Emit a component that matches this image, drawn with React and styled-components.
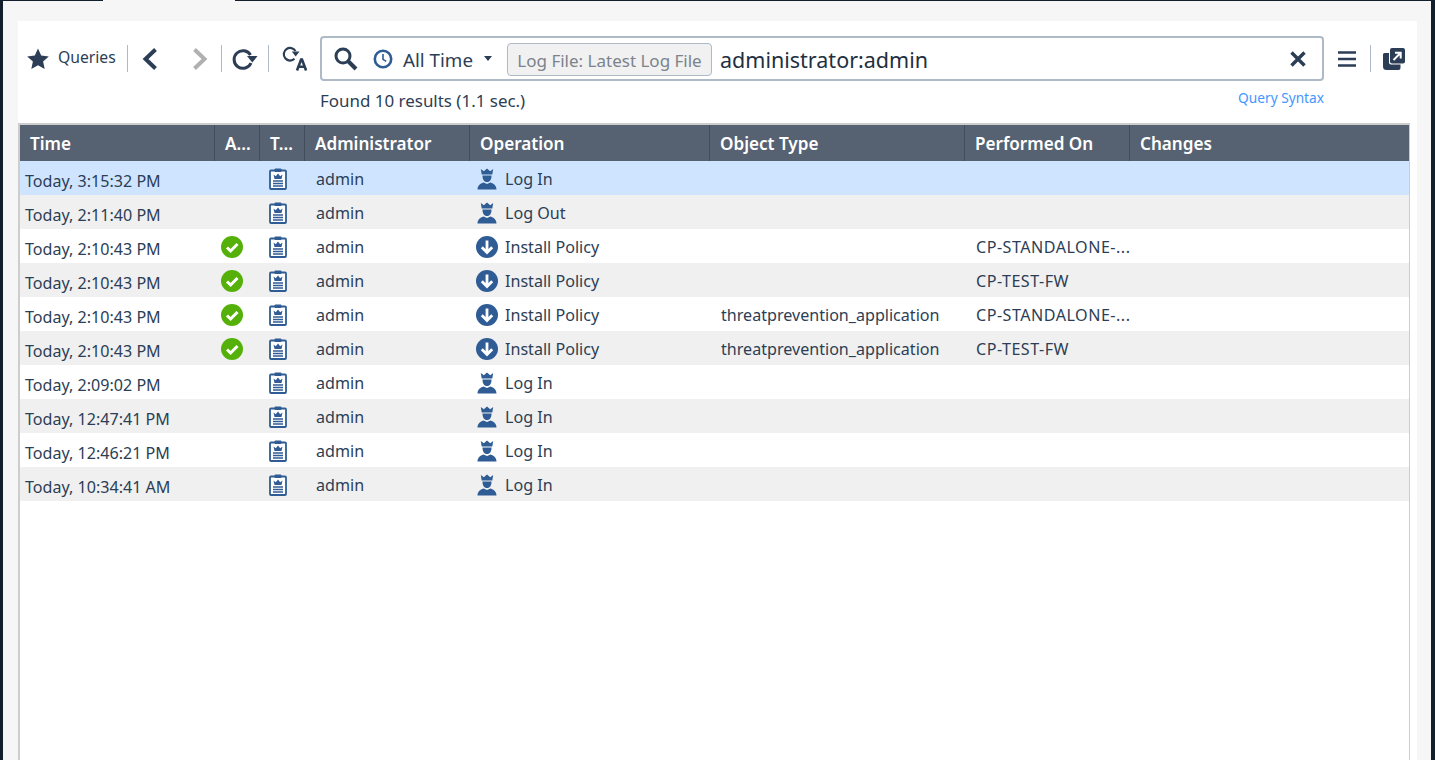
import React from 'react'
import styled, { createGlobalStyle } from 'styled-components'

const GlobalStyle = createGlobalStyle`
  html, body { margin: 0; padding: 0; height: 100%; overflow: hidden; background: #141f2e; }
  body { font-family: "Noto Sans", "Open Sans", "Liberation Sans", sans-serif; color: #2c3e55; }
`

/* ---------------------------- shell ---------------------------- */
const Page = styled.div`
  height: 760px;
  padding: 1px 4px 0 3px;
  box-sizing: border-box;
  overflow: hidden;
`
const Panel = styled.div`
  position: relative;
  height: 759px;
  background: #f6f6f6;
  padding: 20px 14px 0 15px;
  box-sizing: border-box;
`
const ActiveTab = styled.div`
  position: absolute;
  top: -1px;
  left: 100px;
  width: 132px;
  height: 1px;
  background: #f6f6f6;
`
const Content = styled.div`
  background: #fff;
  height: 739px;
  display: flex;
  flex-direction: column;
`

/* ---------------------------- toolbar ---------------------------- */
const Toolbar = styled.div`
  height: 60px;
  display: flex;
  align-items: flex-start;
  padding: 15px 0 0 8px;
  box-sizing: border-box;
`
const Tool = styled.div`
  width: ${p => p.$w}px;
  margin-left: ${p => p.$ml || 0}px;
  margin-right: ${p => p.$mr || 0}px;
  height: 45px;
  flex: none;
  display: flex;
  align-items: center;
  justify-content: ${p => p.$left ? 'flex-start' : 'center'};
`
const QueriesLabel = styled.span`
  font-size: 15.7px;
  margin-left: 8px;
  position: relative;
  top: -2px;
`
const Sep = styled.div`
  width: 1px;
  height: 27px;
  flex: none;
  background: #aebac6;
  margin-top: 9px;
`
const SearchBox = styled.div`
  width: 1004px;
  height: 45px;
  margin-right: 4px;
  flex: none;
  box-sizing: border-box;
  border: 2px solid #aebac6;
  border-radius: 4px;
  display: flex;
  align-items: center;
  padding: 0 15px 0 11px;
`
const ClockSlot = styled.span`
  display: flex;
  margin-left: 14px;
`
const TimeLabel = styled.span`
  font-size: 18.8px;
  margin: 2px 0 0 10px;
  color: #2c3e55;
`
const Caret = styled.span`
  width: 0;
  height: 0;
  margin: 0 15px 0 11px;
  border-left: 4.5px solid transparent;
  border-right: 4.5px solid transparent;
  border-top: 5px solid #2c3e55;
`
const FileChip = styled.div`
  height: 33px;
  width: 205px;
  margin-top: 2px;
  box-sizing: border-box;
  border: 1px solid #aebac6;
  border-radius: 4px;
  background: #f1f1f1;
  color: #7b838c;
  font-size: 17px;
  display: flex;
  align-items: center;
  justify-content: center;
  white-space: nowrap;
  flex: none;
  padding-top: 1px;
`
const QueryText = styled.div`
  flex: 1;
  margin: 2px 0 0 8px;
  font-size: 21.5px;
  color: #222f40;
`

const InfoRow = styled.div`
  height: 42px;
  display: flex;
  justify-content: space-between;
  align-items: flex-start;
  padding-left: 302px;
  width: 1306px;
  box-sizing: border-box;
`
const Found = styled.div`
  font-size: 16.95px;
  line-height: 20px;
  margin-top: 10px;
`
const SyntaxLink = styled.a`
  font-size: 13.7px;
  line-height: 18px;
  margin-top: 8px;
  color: #3f97ff;
`

/* ---------------------------- grid ---------------------------- */
const Grid = styled.div`
  width: 1392px;
  flex: 1;
  box-sizing: border-box;
  border-top: 2px solid #cdcdcd;
  border-left: 2px solid #cdcdcd;
  border-right: 1px solid #cdcdcd;
`
const Columns = `195px 45px 45px 165px 240px 255px 165px 1fr`
const HeaderRow = styled.div`
  display: grid;
  grid-template-columns: ${Columns};
  height: 36px;
  background: #566272;
`
const HeaderCell = styled.div`
  color: #fff;
  font-weight: 600;
  font-size: 17.1px;
  line-height: 36px;
  padding: 1px 0 0 10px;
  box-sizing: border-box;
  white-space: nowrap;
  overflow: hidden;
  border-right: 1px solid #414d5c;
  &:last-child { border-right: none; }
`
const Row = styled.div`
  display: grid;
  grid-template-columns: ${Columns};
  height: 34px;
  background: ${p => p.$selected ? '#cfe5ff' : p.$odd ? '#f0f0f0' : '#fff'};
`
const Cell = styled.div`
  font-size: 16.1px;
  padding: 2px 0 0 11px;
  box-sizing: border-box;
  white-space: nowrap;
  overflow: hidden;
  color: #2c3e55;
  display: flex;
  align-items: center;
`
const TimeCell = styled(Cell)`
  padding-left: 5px;
  padding-top: 6px;
`
const IconCell = styled(Cell)`
  padding-left: 0;
  padding-right: ${p => p.$pr}px;
  justify-content: center;
`
const TargetCell = styled(Cell)`
  letter-spacing: 0.5px;
`
const OpIcon = styled.span`
  width: 22px;
  display: flex;
  justify-content: center;
  margin: 0 7px 0 -5px;
  flex: none;
`

/* ---------------------------- icons ---------------------------- */
const navy = '#2c3e55'
const blue = '#2f5c94'

const Star = () => (
  <svg width="24" height="24" viewBox="0 0 24 24"><path fill={navy} d="M12 1.5l3.2 7.1 7.6.8-5.7 5.1 1.6 7.6L12 18.2l-6.7 3.9 1.6-7.6-5.7-5.1 7.6-.8z" /></svg>
)
const Chevron = ({ dir, color }) => (
  <svg width="20" height="26" viewBox="0 0 20 26">
    <path fill="none" stroke={color} strokeWidth="4" d={dir === 'left' ? 'M15.500 3.500L5.500 13l10 9.500' : 'M4.500 3.500l10 9.500-10 9.500'} />
  </svg>
)
const Refresh = () => (
  <svg width="26" height="24" viewBox="0 0 26 24">
    <path fill="none" stroke={navy} strokeWidth="3" d="M19 16A8.800 8.800 0 1 1 18.500 8" />
    <path fill={navy} d="M15 9h10.500l-5.200 6.500z" />
  </svg>
)
const Translate = () => (
  <svg width="28" height="30" viewBox="-1 0 28 30">
    <path fill="none" stroke={navy} strokeWidth="2.200" d="M12.500 14.800A6.300 6.300 0 1 1 13.500 7" />
    <path fill={navy} d="M9.800 7.500h7.700l-3.800 5z" />
    <path fill="none" stroke={navy} strokeWidth="2.600" d="M15 26.500l4.100-11h.9l4.100 11M16.500 22.800h6" />
  </svg>
)
const Search = () => (
  <svg width="26" height="26" viewBox="0 0 26 26">
    <circle cx="10" cy="10" r="7" fill="none" stroke={navy} strokeWidth="3" />
    <path stroke={navy} strokeWidth="4" d="M15 15l8 8" />
  </svg>
)
const Clock = () => (
  <svg width="20" height="20" viewBox="0 0 20 20">
    <circle cx="10" cy="10" r="8.200" fill="none" stroke={blue} strokeWidth="2.600" />
    <path fill="none" stroke={blue} strokeWidth="1.600" d="M10 5v5.400l3.200 2" />
  </svg>
)
const Close = () => (
  <svg width="18" height="18" viewBox="0 0 18 18"><path stroke={navy} strokeWidth="3.400" d="M2.500 2.500l13 13M15.500 2.500l-13 13" /></svg>
)
const Menu = () => (
  <svg width="20" height="18" viewBox="0 0 20 18"><path stroke={navy} strokeWidth="2.600" d="M1 2.500h18M1 9h18M1 15.500h18" /></svg>
)
const Popout = () => (
  <svg width="22" height="22" viewBox="0 0 22 22">
    <path fill={navy} d="M1.500 5H6v9.500a2 2 0 0 0 2 2h9.500V20a2 2 0 0 1-2 2h-12a3.500 3.500 0 0 1-3.500-3.500V6.500A1.500 1.500 0 0 1 1.500 5z" />
    <rect x="7" y="0" width="15" height="15.500" rx="2" fill={navy} />
    <path fill="none" stroke="#fff" strokeWidth="2" d="M10.500 12l6-6M12 4.800h5.700v5.700" />
  </svg>
)
const Clipboard = () => (
  <svg width="18" height="22" viewBox="0 0 18 22">
    <rect x="1" y="2.500" width="16" height="18.500" rx="1" fill="#fff" stroke={blue} strokeWidth="1.800" />
    <rect x="5.500" y="0.500" width="7" height="3.500" rx="1" fill={blue} />
    <path fill={blue} d="M4.500 6.500l2.300 1.700L9 5.500l2.200 2.700 2.300-1.700-1 4.500h-7z" />
    <path stroke={blue} strokeWidth="1.300" d="M4 13h10M4 15.500h10M4 18h10" />
  </svg>
)
const Check = () => (
  <svg width="22" height="22" viewBox="0 0 22 22">
    <circle cx="11" cy="11" r="11" fill="#55b10a" />
    <path fill="none" stroke="#fff" strokeWidth="3" d="M6 11.500l3.600 3.500L16.500 8" />
  </svg>
)
const Admin = () => (
  <svg width="20" height="22" viewBox="0 0 20 22">
    <path fill={blue} d="M3.800 1l3 2.200L10 .5l3.200 2.700 3-2.200-.9 5.500H4.700z" />
    <path fill={blue} d="M5.500 7.500h9C14.500 11.500 13 14 10 14s-4.500-2.500-4.500-6.500z" />
    <path fill={blue} d="M0.500 21.500c0-3.500 2.500-6 6-7l3.500 1.500 3.500-1.500c3.500 1 6 3.500 6 7z" />
  </svg>
)
const Install = () => (
  <svg width="22" height="22" viewBox="0 0 22 22">
    <circle cx="11" cy="11" r="11" fill={blue} />
    <path fill="none" stroke="#fff" strokeWidth="2.800" d="M11 4.500v12M5.800 11.200l5.200 5.300 5.200-5.300" />
  </svg>
)

/* ---------------------------- data ---------------------------- */
const headers = ['Time', 'A...', 'T...', 'Administrator', 'Operation', 'Object Type', 'Performed On', 'Changes']
const rows = [
  { time: 'Today, 3:15:32 PM', op: 'Log In' },
  { time: 'Today, 2:11:40 PM', op: 'Log Out' },
  { time: 'Today, 2:10:43 PM', op: 'Install Policy', ok: true, on: 'CP-STANDALONE-...' },
  { time: 'Today, 2:10:43 PM', op: 'Install Policy', ok: true, on: 'CP-TEST-FW' },
  { time: 'Today, 2:10:43 PM', op: 'Install Policy', ok: true, type: 'threatprevention_application', on: 'CP-STANDALONE-...' },
  { time: 'Today, 2:10:43 PM', op: 'Install Policy', ok: true, type: 'threatprevention_application', on: 'CP-TEST-FW' },
  { time: 'Today, 2:09:02 PM', op: 'Log In' },
  { time: 'Today, 12:47:41 PM', op: 'Log In' },
  { time: 'Today, 12:46:21 PM', op: 'Log In' },
  { time: 'Today, 10:34:41 AM', op: 'Log In' },
]

const App = () => (
  <Page>
    <GlobalStyle />
    <Panel>
      <ActiveTab />
      <Content>
        <Toolbar>
          <Tool $w={101} $left>
            <Star />
            <QueriesLabel>Queries</QueriesLabel>
          </Tool>
          <Sep />
          <Tool $w={43}><Chevron dir="left" color={navy} /></Tool>
          <Tool $w={43} $ml={7}><Chevron dir="right" color="#b0b0b0" /></Tool>
          <Sep />
          <Tool $w={46}><Refresh /></Tool>
          <Sep />
          <Tool $w={51}><Translate /></Tool>
          <SearchBox>
            <Search />
            <ClockSlot><Clock /></ClockSlot>
            <TimeLabel>All Time</TimeLabel>
            <Caret />
            <FileChip>Log File: Latest Log File</FileChip>
            <QueryText>administrator:admin</QueryText>
            <Close />
          </SearchBox>
          <Tool $w={38} $mr={4}><Menu /></Tool>
          <Sep />
          <Tool $w={46}><Popout /></Tool>
        </Toolbar>
        <InfoRow>
          <Found>Found 10 results (1.1 sec.)</Found>
          <SyntaxLink>Query Syntax</SyntaxLink>
        </InfoRow>
        <Grid>
          <HeaderRow>
            {headers.map(h => <HeaderCell key={h}>{h}</HeaderCell>)}
          </HeaderRow>
          {rows.map((r, i) => (
            <Row key={i} $selected={i === 0} $odd={i % 2 === 1}>
              <TimeCell>{r.time}</TimeCell>
              <IconCell $pr={12}>{r.ok && <Check />}</IconCell>
              <IconCell $pr={10}><Clipboard /></IconCell>
              <Cell>admin</Cell>
              <Cell>
                <OpIcon>{r.ok ? <Install /> : <Admin />}</OpIcon>
                {r.op}
              </Cell>
              <Cell>{r.type}</Cell>
              <TargetCell>{r.on}</TargetCell>
              <Cell />
            </Row>
          ))}
        </Grid>
      </Content>
    </Panel>
  </Page>
)

export default App
